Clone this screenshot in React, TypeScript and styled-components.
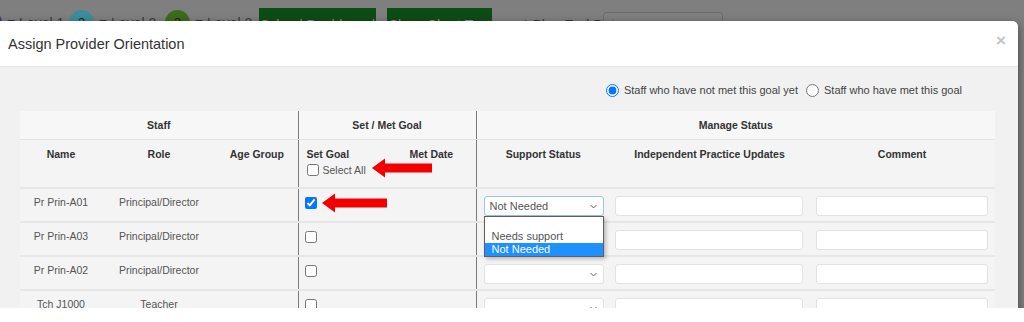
import React from 'react';
import styled, { createGlobalStyle } from 'styled-components';

const GlobalStyle = createGlobalStyle`
  html, body { margin: 0; padding: 0; }
  body {
    font-family: "Liberation Sans", Arial, sans-serif;
    background: #fff;
    overflow: hidden;
  }
  * { box-sizing: border-box; }
`;

const Screen = styled.div`
  width: 1024px;
  height: 322px;
  display: flex;
  flex-direction: column;
`;

const Viewport = styled.div`
  position: relative;
  height: 308px;
  overflow: hidden;
  background: #7f7f7f;
`;

const WhiteBand = styled.div`
  height: 14px;
  background: #fff;
`;

/* the page behind the dimmed backdrop */
const UnderBar = styled.div`
  display: flex;
  align-items: flex-start;
  height: 48px;
  padding-top: 8px;
  color: #393939;
  font-size: 14px;
  white-space: nowrap;
`;

const Legend = styled.div<{ $ml: number; $w: number }>`
  display: flex;
  align-items: center;
  gap: 5px;
  margin-left: ${p => p.$ml}px;
  width: ${p => p.$w}px;
  height: 27px;
  flex: none;

  span:last-child {
    margin-top: 3px;
  }
`;

const Dot = styled.span<{ $bg: string }>`
  flex: none;
  width: 25px;
  height: 25px;
  margin-top: 2px;
  border-radius: 50%;
  background: ${p => p.$bg};
  display: flex;
  align-items: center;
  justify-content: center;
  font-size: 13px;
  color: #1a1a1a;
`;

const PageButton = styled.div<{ $ml: number; $w: number }>`
  flex: none;
  margin-left: ${p => p.$ml}px;
  width: ${p => p.$w}px;
  height: 34px;
  background: #0e4c16;
  color: #8d8d8d;
  display: flex;
  align-items: center;
  justify-content: center;
  font-size: 14px;
`;

const DateLabel = styled.div`
  flex: none;
  margin-left: 31px;
  width: 71px;
  height: 33px;
  display: flex;
  align-items: center;
  gap: 4px;
  span { color: #861515; }
`;

const DateInput = styled.div`
  flex: none;
  margin-left: 9px;
  margin-top: 4px;
  width: 120px;
  height: 30px;
  border: 1px solid #6c6c6c;
  border-radius: 3px;
  padding: 5px 7px;
  color: #3a3a3a;
  font-size: 13px;
`;

/* modal */
const Modal = styled.div`
  position: absolute;
  top: 21px;
  left: 0;
  width: 1018px;
  height: 320px;
  background: #f1f1f1;
  border-radius: 0 6px 0 0;
  box-shadow: 0 3px 9px rgba(0, 0, 0, 0.5);
`;

const ModalHeader = styled.div`
  height: 46px;
  display: flex;
  align-items: center;
  justify-content: space-between;
  padding: 0 12px 0 8px;
  background: #fff;
  border-bottom: 1px solid #e5e5e5;
  border-radius: 0 6px 0 0;
`;

const Title = styled.h4`
  margin: 0;
  font-size: 14.5px;
  font-weight: normal;
  color: #333;
  margin-top: 1px;
`;

const Close = styled.span`
  font-size: 17px;
  font-weight: bold;
  color: #c4c4c4;
  margin-top: -6px;
`;

const ModalBody = styled.div`
  padding: 16px 23px 0 20px;
`;

const FilterRow = styled.div`
  display: flex;
  justify-content: flex-end;
  align-items: center;
  gap: 8px;
  height: 14px;
  margin: 0 33px 14px 0;
  font-size: 11px;
  color: #444;
`;

const RadioLabel = styled.label`
  display: flex;
  align-items: center;
  gap: 5px;

  input {
    width: 13px;
    height: 13px;
    margin: 0;
  }
`;

const Table = styled.table`
  width: 975px;
  border-collapse: collapse;
  table-layout: fixed;
  background: #f4f4f4;
  font-size: 10.5px;
`;

const Col = styled.col<{ $w: number }>`
  width: ${p => p.$w}px;
`;

const divider = '1px solid #7b7b7b';

const GroupHead = styled.th<{ $divider?: boolean }>`
  height: 28px;
  padding: 0;
  font-weight: bold;
  color: #333;
  text-align: center;
  background: #f7f7f7;
  border-bottom: 1px solid #e3e3e3;
  border-left: ${p => (p.$divider ? divider : 'none')};
`;

const SubHead = styled.th<{ $divider?: boolean; $left?: boolean }>`
  height: 49px;
  padding: 7px 0 0 ${p => (p.$left ? '8px' : '0')};
  vertical-align: top;
  line-height: 14px;
  font-weight: bold;
  color: #333;
  text-align: ${p => (p.$left ? 'left' : 'center')};
  border-bottom: 2px solid #e6e6e6;
  border-left: ${p => (p.$divider ? divider : 'none')};
  overflow: visible;
`;

const SelectAllRow = styled.div`
  display: flex;
  align-items: center;
  height: 14px;
  margin-top: 2px;
  font-weight: normal;
  color: #555;
  white-space: nowrap;
  position: relative;
  z-index: 2;

  input {
    flex: none;
    width: 12px;
    height: 12px;
    margin: 0 4px 0 0;
  }

  span {
    flex: none;
  }
`;

const Cell = styled.td<{ $divider?: boolean; $pl?: number; $center?: boolean }>`
  height: 34px;
  padding: 6px 0 0 ${p => p.$pl ?? 0}px;
  vertical-align: top;
  line-height: 14px;
  color: #555;
  white-space: nowrap;
  text-align: ${p => (p.$center ? 'center' : 'left')};
  border-bottom: 2px solid #e6e6e6;
  border-left: ${p => (p.$divider ? divider : 'none')};
`;

const CheckWrap = styled.div`
  display: flex;
  align-items: center;
  height: 12px;
  margin-top: 2px;
  margin-left: -2px;

  input {
    flex: none;
    width: 12px;
    height: 12px;
    margin: 0;
  }
`;

const FieldWrap = styled.div`
  position: relative;
  margin-top: 1px;
`;

const SelectBox = styled.div<{ $focused?: boolean }>`
  width: 120px;
  height: 20px;
  background: #fff;
  border: 1px solid ${p => (p.$focused ? '#9dc3e6' : '#e2e2e2')};
  border-radius: 3px;
  display: flex;
  align-items: center;
  justify-content: space-between;
  padding: 0 6px 0 5px;
  font-size: 11px;
  color: #555;
`;

const TextBox = styled.div<{ $w: number }>`
  width: ${p => p.$w}px;
  height: 20px;
  background: #fff;
  border: 1px solid #e2e2e2;
  border-radius: 3px;
`;

const OptionList = styled.div`
  position: absolute;
  top: 20px;
  left: 0;
  width: 120px;
  background: #fff;
  border: 1px solid #5f5f5f;
  box-shadow: 2px 2px 4px rgba(0, 0, 0, 0.25);
  z-index: 5;
  font-size: 11px;
  color: #555;
`;

const OptionItem = styled.div<{ $active?: boolean }>`
  height: 13px;
  line-height: 13px;
  padding-left: 7px;
  background: ${p => (p.$active ? '#1e90ff' : 'transparent')};
  color: ${p => (p.$active ? '#fff' : '#555')};
`;

const ArrowSvg = styled.svg<{ $ml: number; $mt?: number }>`
  flex: none;
  margin-left: ${p => p.$ml}px;
  margin-top: ${p => p.$mt ?? 0}px;
`;

const Arrow = ({ length, ml, mt }: { length: number; ml: number; mt?: number }) => (
  <ArrowSvg $ml={ml} $mt={mt} width={length} height={20} viewBox={`0 0 ${length} 20`}>
    <polygon
      points={`0,10 13,0.5 13,5.5 ${length},5.5 ${length},14.5 13,14.5 13,19.5`}
      fill="#f20000"
    />
  </ArrowSvg>
);

const Chevron = () => (
  <svg width="7" height="5" viewBox="0 0 7 5">
    <polyline points="0.5,1 3.5,4 6.5,1" fill="none" stroke="#666" strokeWidth="1" />
  </svg>
);

type StaffRow = {
  name: string;
  role: string;
  checked: boolean;
  status: string;
  open?: boolean;
};

const rows: StaffRow[] = [
  { name: 'Pr Prin-A01', role: 'Principal/Director', checked: true, status: 'Not Needed', open: true },
  { name: 'Pr Prin-A03', role: 'Principal/Director', checked: false, status: '' },
  { name: 'Pr Prin-A02', role: 'Principal/Director', checked: false, status: '' },
  { name: 'Tch J1000', role: 'Teacher', checked: false, status: '' },
];

export default function App() {
  return (
    <Screen>
      <GlobalStyle />
      <Viewport>
        <UnderBar>
          <Legend $ml={-23} $w={85}>
            <Dot $bg="#4b3670" />
            <span>= Level 1</span>
          </Legend>
          <Legend $ml={7} $w={88}>
            <Dot $bg="#3c8d9a">2</Dot>
            <span>= Level 2</span>
          </Legend>
          <Legend $ml={8} $w={84}>
            <Dot $bg="#3d6b1d">3</Dot>
            <span>= Level 3</span>
          </Legend>
          <PageButton $ml={10} $w={117}>School Dashboard</PageButton>
          <PageButton $ml={11} $w={105}>Show Short Text</PageButton>
          <DateLabel>
            <span>*</span>Plan End Date:
          </DateLabel>
          <DateInput>11/30/2022</DateInput>
        </UnderBar>

        <Modal>
          <ModalHeader>
            <Title>Assign Provider Orientation</Title>
            <Close>×</Close>
          </ModalHeader>
          <ModalBody>
            <FilterRow>
              <RadioLabel>
                <input type="radio" name="goal" defaultChecked />
                Staff who have not met this goal yet
              </RadioLabel>
              <RadioLabel>
                <input type="radio" name="goal" />
                Staff who have met this goal
              </RadioLabel>
            </FilterRow>

            <Table>
              <colgroup>
                <Col $w={82} />
                <Col $w={114} />
                <Col $w={82} />
                <Col $w={89} />
                <Col $w={89} />
                <Col $w={134} />
                <Col $w={199} />
                <Col $w={186} />
              </colgroup>
              <thead>
                <tr>
                  <GroupHead colSpan={3}>Staff</GroupHead>
                  <GroupHead colSpan={2} $divider>Set / Met Goal</GroupHead>
                  <GroupHead colSpan={3} $divider>Manage Status</GroupHead>
                </tr>
                <tr>
                  <SubHead>Name</SubHead>
                  <SubHead>Role</SubHead>
                  <SubHead>Age Group</SubHead>
                  <SubHead $divider $left>
                    Set Goal
                    <SelectAllRow>
                      <input type="checkbox" readOnly />
                      <span>Select All</span>
                      <Arrow length={60} ml={6} mt={-4} />
                    </SelectAllRow>
                  </SubHead>
                  <SubHead>Met Date</SubHead>
                  <SubHead $divider>Support Status</SubHead>
                  <SubHead>Independent Practice Updates</SubHead>
                  <SubHead>Comment</SubHead>
                </tr>
              </thead>
              <tbody>
                {rows.map(r => (
                  <tr key={r.name}>
                    <Cell $center>{r.name}</Cell>
                    <Cell $center>{r.role}</Cell>
                    <Cell />
                    <Cell $divider $pl={8}>
                      <CheckWrap>
                        <input type="checkbox" checked={r.checked} readOnly />
                        {r.checked && <Arrow length={65} ml={5} />}
                      </CheckWrap>
                    </Cell>
                    <Cell />
                    <Cell $divider $pl={7}>
                      <FieldWrap>
                        <SelectBox $focused={r.open}>
                          <span>{r.status}</span>
                          <Chevron />
                        </SelectBox>
                        {r.open && (
                          <OptionList>
                            <OptionItem />
                            <OptionItem>Needs support</OptionItem>
                            <OptionItem $active>Not Needed</OptionItem>
                          </OptionList>
                        )}
                      </FieldWrap>
                    </Cell>
                    <Cell $pl={5}>
                      <FieldWrap>
                        <TextBox $w={188} />
                      </FieldWrap>
                    </Cell>
                    <Cell $pl={7}>
                      <FieldWrap>
                        <TextBox $w={172} />
                      </FieldWrap>
                    </Cell>
                  </tr>
                ))}
              </tbody>
            </Table>
          </ModalBody>
        </Modal>
      </Viewport>
      <WhiteBand />
    </Screen>
  );
}
